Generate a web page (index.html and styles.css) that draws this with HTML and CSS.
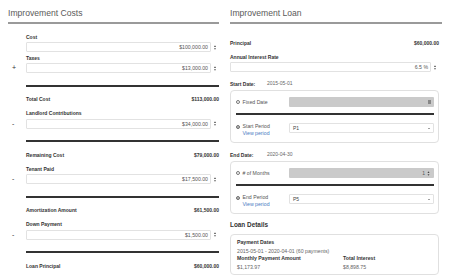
FILE: index.html
```html
<!doctype html>
<html lang="en">
  <head>
    <meta charset="UTF-8" />
    <meta name="viewport" content="width=device-width, initial-scale=1.0" />
    <title>Improvement Costs</title>
    <link rel="stylesheet" href="styles.css">
  </head>
  <body>
    <div class="page">
      <!-- kolom kiri: biaya -->
      <section class="col costs">
        <h2>Improvement Costs</h2>

        <div class="label first">Cost</div>
        <div class="input-row">
          <span class="sign"></span>
          <div class="num">$100,000.00</div>
          <svg class="spin" viewBox="0 0 4 8"><polygon points="2,0.5 3.6,3 0.4,3" /><polygon points="2,7.5 3.6,5 0.4,5" /></svg>
        </div>
        <div class="label near">Taxes</div>
        <div class="input-row">
          <span class="sign">+</span>
          <div class="num">$13,000.00</div>
          <svg class="spin" viewBox="0 0 4 8"><polygon points="2,0.5 3.6,3 0.4,3" /><polygon points="2,7.5 3.6,5 0.4,5" /></svg>
        </div>
        <div class="rule"></div>
        <div class="sum"><span>Total Cost</span><span>$113,000.00</span></div>

        <div class="label">Landlord Contributions</div>
        <div class="input-row">
          <span class="sign">-</span>
          <div class="num">$34,000.00</div>
          <svg class="spin" viewBox="0 0 4 8"><polygon points="2,0.5 3.6,3 0.4,3" /><polygon points="2,7.5 3.6,5 0.4,5" /></svg>
        </div>
        <div class="rule"></div>
        <div class="sum"><span>Remaining Cost</span><span>$79,000.00</span></div>

        <div class="label">Tenant Paid</div>
        <div class="input-row">
          <span class="sign">-</span>
          <div class="num">$17,500.00</div>
          <svg class="spin" viewBox="0 0 4 8"><polygon points="2,0.5 3.6,3 0.4,3" /><polygon points="2,7.5 3.6,5 0.4,5" /></svg>
        </div>
        <div class="rule"></div>
        <div class="sum"><span>Amortization Amount</span><span>$61,500.00</span></div>

        <div class="label">Down Payment</div>
        <div class="input-row">
          <span class="sign">-</span>
          <div class="num">$1,500.00</div>
          <svg class="spin" viewBox="0 0 4 8"><polygon points="2,0.5 3.6,3 0.4,3" /><polygon points="2,7.5 3.6,5 0.4,5" /></svg>
        </div>
        <div class="rule"></div>
        <div class="sum"><span>Loan Principal</span><span>$60,000.00</span></div>
      </section>

      <!-- kolom kanan: pinjaman -->
      <section class="col loan">
        <h2>Improvement Loan</h2>

        <div class="sum principal"><span>Principal</span><span>$60,000.00</span></div>
        <div class="label">Annual Interest Rate</div>
        <div class="input-row">
          <div class="num">6.5 %</div>
          <svg class="spin" viewBox="0 0 4 8"><polygon points="2,0.5 3.6,3 0.4,3" /><polygon points="2,7.5 3.6,5 0.4,5" /></svg>
        </div>

        <div class="date-row"><span class="date-label">Start Date:</span><span class="date-value">2015-05-01</span></div>
        <div class="panel">
          <div class="option">
            <div class="opt-label"><span class="radio"></span>Fixed Date</div>
            <div class="ctrl disabled"><span class="cal"></span></div>
          </div>
          <div class="panel-rule"></div>
          <div class="option second">
            <div class="opt-label">
              <div><span class="radio on"></span>Start Period</div>
              <a class="link" href="#">View period</a>
            </div>
            <div class="ctrl select">P1<span class="caret"></span></div>
          </div>
        </div>

        <div class="date-row"><span class="date-label">End Date:</span><span class="date-value">2020-04-30</span></div>
        <div class="panel">
          <div class="option">
            <div class="opt-label"><span class="radio"></span># of Months</div>
            <div class="ctrl disabled"><span class="months">1</span>
              <svg class="spin small" viewBox="0 0 4 8"><polygon points="2,0.5 3.6,3 0.4,3" /><polygon points="2,7.5 3.6,5 0.4,5" /></svg>
            </div>
          </div>
          <div class="panel-rule"></div>
          <div class="option second">
            <div class="opt-label">
              <div><span class="radio on"></span>End Period</div>
              <a class="link" href="#">View period</a>
            </div>
            <div class="ctrl select">P5<span class="caret"></span></div>
          </div>
        </div>

        <h3>Loan Details</h3>
        <div class="details">
          <div class="d-head">Payment Dates</div>
          <div class="d-text">2015-05-01 - 2020-04-01 (60 payments)</div>
          <div class="d-grid">
            <span class="d-head">Monthly Payment Amount</span>
            <span class="d-head">Total Interest</span>
            <span class="d-text">$1,173.97</span>
            <span class="d-text">$8,898.75</span>
          </div>
        </div>
      </section>
    </div>
  </body>
</html>
```

FILE: styles.css
```css
* {
  box-sizing: border-box;
}

body {
  margin: 0;
  background: #ffffff;
  font-family: "Liberation Sans", Arial, sans-serif;
  color: #333;
}

.page {
  display: flex;
  gap: 11px;
  padding: 0 8px;
}

.col {
  width: 211px;
}

.loan {
  width: 212px;
}

h2 {
  margin: 0;
  padding: 8px 0 4px;
  font-size: 8.6px;
  line-height: 10px;
  font-weight: normal;
  color: #5a5a5a;
  border-bottom: 2px solid #9a9a9a;
}

.label {
  font-size: 5px;
  line-height: 7px;
  font-weight: bold;
  margin-top: 7px;
  margin-bottom: 1.5px;
}

.costs .label,
.costs .rule,
.costs .sum {
  margin-left: 18px;
}

.label.first {
  margin-top: 9.5px;
}

.label.near {
  margin-top: 2.5px;
}

.input-row {
  display: flex;
  align-items: center;
  height: 10px;
}

.sign {
  width: 18px;
  padding-left: 4px;
  font-size: 7px;
  line-height: 10px;
  color: #333;
}

.num {
  flex: 1;
  height: 10px;
  border: 1px solid #e2e2e2;
  border-radius: 1px;
  font-size: 5.2px;
  line-height: 8px;
  text-align: right;
  padding-right: 2px;
  color: #555;
}

.spin {
  width: 8px;
  height: 5px;
  padding: 0 2px;
  fill: #444;
}

.spin.small {
  width: 7px;
}

.rule {
  height: 2px;
  background: #333;
  margin-top: 11.5px;
}

.sum {
  display: flex;
  justify-content: space-between;
  font-size: 5px;
  line-height: 7px;
  font-weight: bold;
  margin-top: 9.5px;
}

/* kolom kanan */
.loan > .sum,
.loan > .label,
.loan > .input-row,
.loan > .date-row,
.loan > .panel,
.loan > .details {
  margin-right: 3px;
}

.sum.principal {
  margin-top: 15.5px;
}

.loan .label {
  margin-top: 7px;
}

.date-row {
  display: flex;
  align-items: flex-start;
  margin-top: 7.5px;
  font-size: 5px;
  line-height: 7px;
}

.date-label {
  width: 37px;
  font-weight: bold;
  padding-top: 1.5px;
}

.date-value {
  color: #666;
}

.panel {
  margin-top: 2px;
  border: 1px solid #e0e0e0;
  border-radius: 4px;
  padding: 6px 4px 5px 5px;
}

.option {
  display: flex;
  align-items: flex-start;
}

.option.second {
  margin-top: 8px;
}

.opt-label {
  width: 53px;
  font-size: 5.2px;
  line-height: 7px;
  color: #555;
}

.opt-label > div {
  display: flex;
  align-items: center;
}

.option:first-child .opt-label {
  display: flex;
  align-items: center;
  padding-top: 1.5px;
}

.radio {
  width: 4px;
  height: 4px;
  border: 0.6px solid #777;
  border-radius: 50%;
  margin-right: 2.5px;
}

.radio.on {
  background: #333;
  box-shadow: inset 0 0 0 0.6px #fff;
}

.link {
  display: block;
  padding-left: 6.5px;
  color: #4a7cbf;
  text-decoration: none;
}

.ctrl {
  flex: 1;
  height: 10px;
  display: flex;
  align-items: center;
  border-radius: 1px;
  font-size: 5px;
}

.ctrl.disabled {
  background: #cacaca;
  justify-content: flex-end;
  padding-right: 2px;
}

.ctrl.select {
  border: 1px solid #e2e2e2;
  padding: 0 3px;
  justify-content: space-between;
  color: #444;
}

.cal {
  width: 3.5px;
  height: 3.5px;
  background: #888;
  margin-right: 1px;
}

.months {
  color: #555;
}

.caret {
  width: 0;
  height: 0;
  border-left: 1.2px solid transparent;
  border-right: 1.2px solid transparent;
  border-top: 1.5px solid #444;
}

.panel-rule {
  height: 2px;
  background: #333;
  margin-top: 6px;
}

h3 {
  margin: 7px 0 0;
  font-size: 6.4px;
  line-height: 8px;
  font-weight: bold;
  color: #333;
}

.details {
  margin-top: 5px;
  border: 1px solid #e0e0e0;
  border-radius: 4px;
  padding: 3.5px 6px 3.5px;
  font-size: 5.2px;
  line-height: 7px;
}

.d-head {
  font-weight: bold;
  color: #333;
}

.d-text {
  color: #666;
}

.details > .d-text {
  margin-top: 2px;
}

.d-grid {
  display: grid;
  grid-template-columns: 106px 1fr;
  row-gap: 2px;
}
```
